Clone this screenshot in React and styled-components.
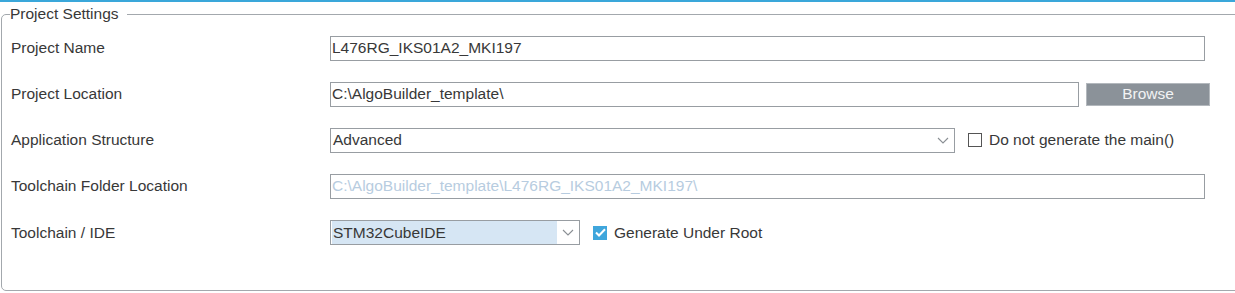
import * as React from 'react';
import styled, {createGlobalStyle} from 'styled-components';

const GlobalStyle = createGlobalStyle`
  html, body {
    margin: 0;
    padding: 0;
    background: #fff;
    overflow: hidden;
  }
  body {
    font-family: "Liberation Sans", Arial, sans-serif;
    color: #333;
  }
`;

const TopBar = styled.div`
  height: 2px;
  background: #3aa7da;
`;

const Panel = styled.fieldset`
  margin: 3px 0 0 1px;
  width: calc(100% + 20px);
  box-sizing: border-box;
  border: 1px solid #a3a8ad;
  border-radius: 5px;
  padding: 13px 0 45px 9px;
  min-width: 0;
`;

const Legend = styled.legend`
  padding: 0 8px 0 0;
  margin-left: -1px;
  font-size: 15.5px;
  line-height: 18px;
  color: #383838;
`;

const Grid = styled.div`
  display: grid;
  grid-template-columns: 319px auto;
  grid-template-rows: repeat(4, 24px) 25px;
  row-gap: 22px;
  align-items: center;
`;

const Label = styled.div`
  font-size: 15.5px;
  color: #383838;
  line-height: 24px;
`;

const Line = styled.div`
  display: flex;
  align-items: center;
  height: 100%;
`;

const Field = styled.div`
  box-sizing: border-box;
  width: ${(p) => p.$w}px;
  height: 25px;
  border: 1px solid #989da2;
  background: #fff;
  display: flex;
  align-items: center;
  font-size: 15.5px;
  color: ${(p) => (p.$disabled ? '#b7cce0' : '#383838')};
  padding-left: 1px;
  white-space: nowrap;
  overflow: hidden;
`;

const SelectValue = styled.div`
  flex: 1;
  height: 100%;
  display: flex;
  align-items: center;
  padding-left: 1px;
  background: ${(p) => (p.$selected ? '#d6e6f4' : 'transparent')};
`;

const Chevron = styled.div`
  width: 22px;
  height: 100%;
  display: flex;
  align-items: center;
  justify-content: center;
  background: #fff;
`;

const Button = styled.div`
  box-sizing: border-box;
  margin-left: 7px;
  width: 124px;
  height: 23px;
  background: #8b9299;
  border: 1px solid #b3b8bd;
  color: #f2f3f4;
  font-size: 15.5px;
  display: flex;
  align-items: center;
  justify-content: center;
`;

const Check = styled.label`
  display: flex;
  align-items: center;
  margin-left: ${(p) => p.$ml}px;
  font-size: 15.5px;
  color: #383838;
  gap: 7px;
`;

const Box = styled.span`
  box-sizing: border-box;
  width: 14px;
  height: 14px;
  border: ${(p) => (p.$checked ? 'none' : '1px solid #555')};
  background: ${(p) => (p.$checked ? '#3fa6dc' : '#fff')};
  display: flex;
  align-items: center;
  justify-content: center;
`;

function ChevronIcon() {
  return (
    <svg width="12" height="7" viewBox="0 0 12 7">
      <path d="M1 1 L6 6 L11 1" fill="none" stroke="#8a8f94" strokeWidth="1.1" />
    </svg>
  );
}

function Select({width, value, selected}) {
  return (
    <Field $w={width}>
      <SelectValue $selected={selected}>{value}</SelectValue>
      <Chevron>
        <ChevronIcon />
      </Chevron>
    </Field>
  );
}

function CheckBox({checked, label, ml}) {
  return (
    <Check $ml={ml}>
      <Box $checked={checked}>
        {checked && (
          <svg width="11" height="9" viewBox="0 0 11 9">
            <path d="M1 4.5 L4 7.5 L10 1.2" fill="none" stroke="#fff" strokeWidth="2" />
          </svg>
        )}
      </Box>
      {label}
    </Check>
  );
}

export default function App() {
  return (
    <>
      <GlobalStyle />
      <TopBar />
      <Panel>
        <Legend>Project Settings</Legend>
        <Grid>
          <Label>Project Name</Label>
          <Line>
            <Field $w={875}>L476RG_IKS01A2_MKI197</Field>
          </Line>

          <Label>Project Location</Label>
          <Line>
            <Field $w={749}>C:\AlgoBuilder_template\</Field>
            <Button>Browse</Button>
          </Line>

          <Label>Application Structure</Label>
          <Line>
            <Select width={625} value="Advanced" />
            <CheckBox ml={13} label="Do not generate the main()" />
          </Line>

          <Label>Toolchain Folder Location</Label>
          <Line>
            <Field $w={875} $disabled>
              C:\AlgoBuilder_template\L476RG_IKS01A2_MKI197\
            </Field>
          </Line>

          <Label>Toolchain / IDE</Label>
          <Line>
            <Select width={250} value="STM32CubeIDE" selected />
            <CheckBox ml={13} checked label="Generate Under Root" />
          </Line>
        </Grid>
      </Panel>
    </>
  );
}
